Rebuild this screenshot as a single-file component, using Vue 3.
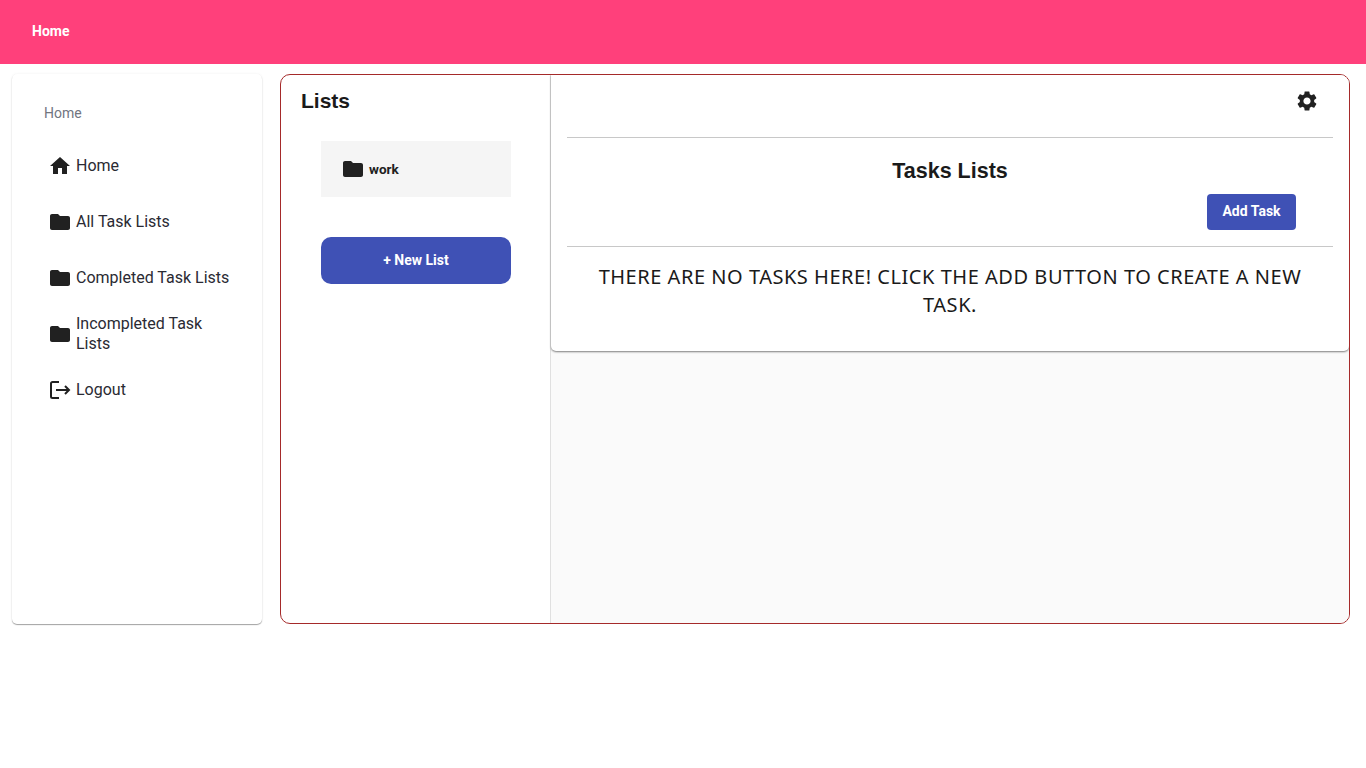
<script setup>
const navItems = [
  { label: "Home", icon: "home" },
  { label: "All Task Lists", icon: "folder" },
  { label: "Completed Task Lists", icon: "folder" },
  { label: "Incompleted Task Lists", icon: "folder" },
  { label: "Logout", icon: "logout" }
];

const icons = {
  home: "M10 20v-6h4v6h5v-8h3L12 3 2 12h3v8z",
  folder: "M10 4H4c-1.1 0-2 .9-2 2v12c0 1.1.9 2 2 2h16c1.1 0 2-.9 2-2V8c0-1.100-.9-2-2-2h-8l-2-2z"
};
</script>

<template>
  <div class="page">
    <header class="topbar">
      <a class="topbar-link">Home</a>
    </header>

    <div class="content">
      <aside class="sidebar">
        <div class="sidebar-title">Home</div>
        <ul class="nav">
          <li v-for="item in navItems" :key="item.label" class="nav-item">
            <svg v-if="item.icon !== 'logout'" class="icon" viewBox="0 0 24 24" fill="#212121">
              <path :d="icons[item.icon]" />
            </svg>
            <svg v-else class="icon" viewBox="0 0 24 24" fill="none" stroke="#212121" stroke-width="2">
              <path d="M11 4H4.500C3.700 4 3 4.700 3 5.500v13C3 19.300 3.700 20 4.500 20H11" />
              <path d="M8 12h13M17 8l4 4-4 4" />
            </svg>
            <span>{{ item.label }}</span>
          </li>
        </ul>
      </aside>

      <main class="board">
        <section class="lists">
          <h2 class="lists-title">Lists</h2>
          <div class="list-row">
            <svg class="icon" viewBox="0 0 24 24" fill="#212121"><path :d="icons.folder" /></svg>
            <span>work</span>
          </div>
          <button class="new-list">+ New List</button>
        </section>

        <section class="tasks">
          <div class="tasks-card">
            <div class="tasks-head">
              <svg class="gear" viewBox="0 0 24 24" fill="#212121">
                <path d="M19.140 12.940c.04-.3.06-.61.06-.94 0-.32-.02-.64-.07-.94l2.030-1.580a.49.49 0 0 0 .12-.61l-1.920-3.320a.488.488 0 0 0-.59-.22l-2.390.96c-.5-.38-1.030-.7-1.620-.94l-.36-2.540a.484.484 0 0 0-.48-.41h-3.840c-.24 0-.43.17-.47.41l-.36 2.540c-.59.24-1.130.57-1.620.94l-2.390-.96c-.22-.08-.47 0-.59.22L2.740 8.870c-.12.21-.08.47.12.61l2.030 1.580c-.05.3-.09.63-.09.94s.02.64.07.94l-2.030 1.580a.49.49 0 0 0-.12.61l1.920 3.320c.12.22.37.29.59.22l2.390-.96c.5.38 1.030.7 1.620.94l.36 2.540c.05.24.24.41.48.41h3.840c.24 0 .44-.17.47-.41l.36-2.540c.59-.24 1.130-.56 1.620-.94l2.390.96c.22.08.47 0 .59-.22l1.920-3.320c.12-.22.07-.47-.12-.61l-2.010-1.580zM12 15.600c-1.980 0-3.600-1.620-3.600-3.600s1.620-3.600 3.600-3.600 3.600 1.620 3.600 3.600-1.620 3.600-3.600 3.600z" />
              </svg>
            </div>
            <div class="tasks-title-block">
              <h3 class="tasks-title">Tasks Lists</h3>
              <div class="tasks-actions">
                <button class="add-task">Add Task</button>
              </div>
            </div>
            <p class="empty">There are no tasks here! Click the add button to create a new task.</p>
          </div>
        </section>
      </main>
    </div>
  </div>
</template>

<style>
html,
body {
  margin: 0;
  background: #fff;
}
</style>

<style scoped>
.page {
  min-height: 768px;
  font-family: Roboto, "Liberation Sans", sans-serif;
  color: #212121;
}
.topbar {
  height: 64px;
  background: #ff407b;
  display: flex;
  align-items: center;
  padding: 0 32px 2px;
  box-sizing: border-box;
}
.topbar-link {
  color: #fff;
  font-size: 14px;
  font-weight: 700;
}
.content {
  display: flex;
  align-items: flex-start;
  gap: 18px;
  padding: 10px 16px 0 12px;
}
.sidebar {
  width: 250px;
  height: 550px;
  flex: none;
  box-sizing: border-box;
  padding: 30px 32px 0;
  background: #fff;
  border-radius: 5px;
  box-shadow: 0 1px 1px rgba(0, 0, 0, 0.35), 0 0 3px rgba(0, 0, 0, 0.06);
}
.sidebar-title {
  font-size: 14px;
  line-height: 18px;
  color: #71757f;
}
.nav {
  list-style: none;
  margin: 16px 0 0;
  padding: 0 0 0 4px;
}
.nav-item {
  height: 56px;
  display: flex;
  align-items: center;
  gap: 4px;
  font-size: 16px;
  line-height: 20px;
  font-weight: 400;
  color: #2a2a33;
}
.icon {
  width: 24px;
  height: 24px;
  flex: none;
}
.board {
  flex: 1;
  height: 550px;
  display: flex;
  box-sizing: border-box;
  border: 1px solid #a52a2a;
  border-radius: 10px;
  overflow: hidden;
}
.lists {
  width: 270px;
  flex: none;
  box-sizing: border-box;
  border-right: 1px solid #e0e0e0;
  padding: 13px 39px 0 40px;
}
.lists-title {
  margin: 0 0 0 -20px;
  font-family: "Liberation Sans", sans-serif;
  font-size: 21px;
  line-height: 26px;
  font-weight: 700;
  color: #1a1a1a;
}
.list-row {
  height: 56px;
  margin-top: 27px;
  display: flex;
  align-items: center;
  gap: 4px;
  padding-left: 20px;
  background: #f5f5f5;
  font-size: 13.5px;
  font-weight: 700;
}
.new-list {
  display: block;
  width: 100%;
  height: 47px;
  margin-top: 40px;
  padding: 0 0 2px;
  border: none;
  border-radius: 10px;
  background: #3f51b5;
  color: #fff;
  font-family: inherit;
  font-size: 14px;
  font-weight: 700;
}
.tasks {
  flex: 1;
  background: #fafafa;
}
.tasks-card {
  height: 276px;
  box-sizing: border-box;
  padding: 0 16px;
  background: #fff;
  border-radius: 0 0 5px 5px;
  box-shadow: 0 1px 2px rgba(0, 0, 0, 0.5);
}
.tasks-head {
  height: 63px;
  display: flex;
  justify-content: flex-end;
  align-items: flex-start;
  padding: 14px 14px 0 0;
  box-sizing: border-box;
  border-bottom: 1px solid #c8c8c8;
}
.gear {
  width: 24px;
  height: 24px;
}
.tasks-title-block {
  height: 109px;
  box-sizing: border-box;
  border-bottom: 1px solid #c8c8c8;
  padding-top: 20px;
}
.tasks-title {
  margin: 0;
  text-align: center;
  font-family: "Liberation Sans", sans-serif;
  font-size: 21.5px;
  line-height: 26px;
  font-weight: 700;
  color: #1a1a1a;
}
.tasks-actions {
  display: flex;
  justify-content: flex-end;
  padding-right: 37px;
  margin-top: 10px;
}
.add-task {
  width: 89px;
  height: 36px;
  padding: 0 0 2px;
  border: none;
  border-radius: 4px;
  background: #3f51b5;
  color: #fff;
  font-family: inherit;
  font-size: 14px;
  font-weight: 700;
}
.empty {
  margin: 16px 16px 0;
  text-align: center;
  text-transform: uppercase;
  font-family: "Comic Sans MS", "Noto Sans", sans-serif;
  font-size: 20px;
  letter-spacing: 0.53px;
  line-height: 28px;
  color: #1a1a1a;
}
</style>
